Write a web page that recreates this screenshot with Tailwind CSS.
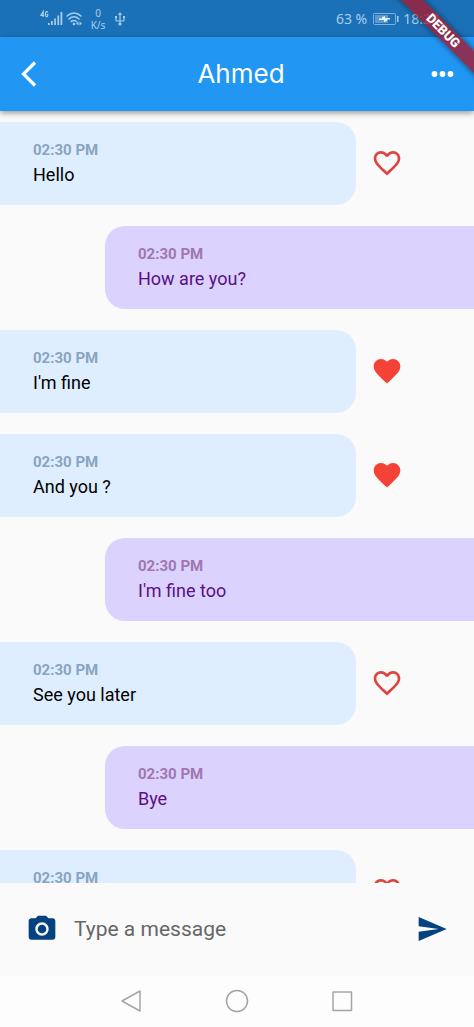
<!DOCTYPE html>
<html lang="en">
<head>
<meta charset="utf-8">
<meta name="viewport" content="width=device-width, initial-scale=1">
<title>Ahmed</title>
<script src="https://cdn.jsdelivr.net/npm/@tailwindcss/browser@4"></script>
</head>
<body class="relative flex h-screen flex-col overflow-hidden bg-[#fafafa] font-['Roboto',sans-serif]">
<svg class="hidden" aria-hidden="true">
  <symbol id="heart" viewBox="0 0 24 24"><path fill="currentColor" d="M12 21.35l-1.45-1.32C5.4 15.36 2 12.28 2 8.5 2 5.42 4.42 3 7.5 3c1.74 0 3.41.81 4.5 2.09C13.09 3.81 14.76 3 16.5 3 19.58 3 22 5.42 22 8.5c0 3.78-3.4 6.86-8.55 11.54L12 21.35z"/></symbol>
  <symbol id="heart-outline" viewBox="0 0 24 24"><path fill="currentColor" d="M16.5 3c-1.74 0-3.41.81-4.5 2.09C10.91 3.81 9.24 3 7.5 3 4.42 3 2 5.42 2 8.5c0 3.78 3.4 6.86 8.55 11.54L12 21.35l1.45-1.32C18.6 15.36 22 12.28 22 8.5 22 5.42 19.58 3 16.5 3zm-4.4 15.55l-.1.1-.1-.1C7.14 14.24 4 11.39 4 8.5 4 6.5 5.5 5 7.5 5c1.54 0 3.04.99 3.57 2.36h1.87C13.46 5.99 14.96 5 16.5 5c2 0 3.5 1.5 3.5 3.5 0 2.89-3.14 5.74-7.9 10.05z"/></symbol>
</svg>

<div class="flex h-[37px] shrink-0 items-center justify-between bg-[#1b71b8] pr-[35px] pl-10 font-['Noto_Sans',sans-serif] text-[#a9cdeb]">
  <div class="flex items-center">
    <svg class="h-5 w-6" viewBox="0 0 24 20" aria-label="4G signal">
      <g fill="none" stroke="currentColor" stroke-width="1.200"><path d="M3.200 8V2.500L1 6.300h3.200M7.700 3.500Q7.500 2.700 6.700 2.700 5.500 2.700 5.500 5.200T6.700 7.700Q7.800 7.700 7.800 5.500H6.700"/></g>
      <path fill="currentColor" d="M8 14h1.700v2H8zM11 12h1.700v4H11zM14.200 9.500h1.700V16h-1.700zM17.400 6.500h1.700V16h-1.700zM20.500 3h1.800v13h-1.800z"/>
    </svg>
    <svg class="ml-0.5 h-5 w-4" viewBox="0 0 16 20" aria-label="Wi-Fi">
      <g fill="none" stroke="currentColor" stroke-width="1.600" stroke-linecap="round"><path d="M1 7Q8 1 15 7M3 10Q8 5.500 13 10M5.300 12.500Q8 10.500 10.500 12.500"/></g>
      <circle cx="8" cy="15" r="1.300" fill="currentColor"/><path fill="currentColor" d="M10 14.500l2.500-2v4zM16 14.500l-2.500-2v4z"/>
    </svg>
    <div class="ml-2 w-4 text-center text-[10px] leading-3 font-normal"><div>0</div><div>K/s</div></div>
    <svg class="ml-2 h-4 w-3" viewBox="0 0 12 16" aria-label="USB">
      <g fill="none" stroke="currentColor" stroke-width="1.200"><path d="M6 3v10M2 6v3q0 1 1 1h6q1 0 1-1V6"/></g><path fill="currentColor" d="M6 1l2 3H4zM1 5h2v2H1zM9 5h2v2H9z"/><circle cx="6" cy="13" r="1.600" fill="currentColor"/>
    </svg>
  </div>
  <div class="flex items-center text-sm">
    <span>63 %</span>
    <svg class="mr-1 ml-1.5 h-4 w-[26px]" viewBox="0 0 26 16" aria-label="Battery charging">
      <rect x=".5" y="2.500" width="22" height="11" rx="1" fill="none" stroke="currentColor" opacity=".7"/><rect x="2" y="4" width="13" height="8" fill="currentColor" opacity=".45"/>
      <path fill="#e3f2fd" d="M6 7.500h3V6l3-1V7h5v1.500h-3V10l-3 1V9H6z"/><path fill="currentColor" d="M24 5h1.500v6H24z"/>
    </svg>
    <span>18:29</span>
  </div>
</div>

<header class="z-10 grid h-[74px] shrink-0 grid-cols-[1fr_auto_1fr] items-center bg-[#2196f3] px-4 text-white shadow-[0_2px_6px_rgba(0,0,0,0.4)]">
  <button aria-label="Back" class="justify-self-start"><svg class="h-8 w-6" viewBox="0 0 24 32"><path d="M19 4.500L7.500 16 19 27.500" fill="none" stroke="currentColor" stroke-width="3.200"/></svg></button>
  <h1 class="pl-2 font-['Inter',sans-serif] text-[26px] leading-8">Ahmed</h1>
  <button aria-label="More options" class="justify-self-end"><svg class="h-8 w-8" viewBox="0 0 32 32" fill="currentColor"><circle cx="8.500" cy="16" r="2.900"/><circle cx="16.500" cy="16" r="2.900"/><circle cx="24.500" cy="16" r="2.900"/></svg></button>
</header>

<main class="flex min-h-0 flex-1 flex-col gap-[21px] overflow-hidden pt-[11px] text-lg leading-6">
  <div class="flex shrink-0 items-center gap-[15px]">
    <article class="w-3/4 rounded-r-[20px] bg-[#dfeefe] pt-4 pb-[18px] pl-[33px]"><time class="block text-[15px] font-bold text-[#87a5c0]">02:30 PM</time><p class="pt-px text-black">Hello</p></article>
    <button aria-label="Like" class="pb-0.5 text-[#dc4540]"><svg class="size-8"><use href="#heart-outline"/></svg></button>
  </div>
  <article class="ml-[105px] shrink-0 rounded-l-[20px] bg-[#dbd2fd] pt-4 pb-[18px] pl-[33px]"><time class="block text-[15px] font-bold text-[#a077b1]">02:30 PM</time><p class="pt-px text-[#5a0f86]">How are you?</p></article>
  <div class="flex shrink-0 items-center gap-[15px]">
    <article class="w-3/4 rounded-r-[20px] bg-[#dfeefe] pt-4 pb-[18px] pl-[33px]"><time class="block text-[15px] font-bold text-[#87a5c0]">02:30 PM</time><p class="pt-px text-black">I'm fine</p></article>
    <button aria-label="Unlike" class="pb-0.5 text-[#f44336]"><svg class="size-8"><use href="#heart"/></svg></button>
  </div>
  <div class="flex shrink-0 items-center gap-[15px]">
    <article class="w-3/4 rounded-r-[20px] bg-[#dfeefe] pt-4 pb-[18px] pl-[33px]"><time class="block text-[15px] font-bold text-[#87a5c0]">02:30 PM</time><p class="pt-px text-black">And you ?</p></article>
    <button aria-label="Unlike" class="pb-0.5 text-[#f44336]"><svg class="size-8"><use href="#heart"/></svg></button>
  </div>
  <article class="ml-[105px] shrink-0 rounded-l-[20px] bg-[#dbd2fd] pt-4 pb-[18px] pl-[33px]"><time class="block text-[15px] font-bold text-[#a077b1]">02:30 PM</time><p class="pt-px text-[#5a0f86]">I'm fine too</p></article>
  <div class="flex shrink-0 items-center gap-[15px]">
    <article class="w-3/4 rounded-r-[20px] bg-[#dfeefe] pt-4 pb-[18px] pl-[33px]"><time class="block text-[15px] font-bold text-[#87a5c0]">02:30 PM</time><p class="pt-px text-black">See you later</p></article>
    <button aria-label="Like" class="pb-0.5 text-[#dc4540]"><svg class="size-8"><use href="#heart-outline"/></svg></button>
  </div>
  <article class="ml-[105px] shrink-0 rounded-l-[20px] bg-[#dbd2fd] pt-4 pb-[18px] pl-[33px]"><time class="block text-[15px] font-bold text-[#a077b1]">02:30 PM</time><p class="pt-px text-[#5a0f86]">Bye</p></article>
  <div class="flex shrink-0 items-start gap-[15px]">
    <article class="h-[83px] w-3/4 rounded-r-[20px] bg-[#dfeefe] pt-4 pb-[18px] pl-[33px]"><time class="block text-[15px] font-bold text-[#87a5c0]">02:30 PM</time></article>
    <button aria-label="Like" class="self-center pb-0.5 text-[#dc4540]"><svg class="size-8"><use href="#heart-outline"/></svg></button>
  </div>
</main>

<form class="flex h-[93px] shrink-0 items-center gap-4 px-[26px] pb-0.5 text-[#04417f]">
  <button type="button" aria-label="Take a photo"><svg class="size-8" viewBox="0 0 24 24" fill="currentColor"><circle cx="12" cy="12" r="3.200"/><path d="M9 2L7.170 4H4c-1.100 0-2 .9-2 2v12c0 1.100.9 2 2 2h16c1.100 0 2-.9 2-2V6c0-1.100-.9-2-2-2h-3.170L15 2H9zm3 15c-2.760 0-5-2.240-5-5s2.240-5 5-5 5 2.240 5 5-2.240 5-5 5z"/></svg></button>
  <input type="text" aria-label="Message" placeholder="Type a message" class="min-w-0 flex-1 bg-transparent text-[21px] leading-8 text-black outline-none placeholder:text-[#666]">
  <button type="submit" aria-label="Send"><svg class="size-8" viewBox="0 0 24 24" fill="currentColor"><path d="M2.010 21L23 12 2.010 3 2 10l15 2-15 2z"/></svg></button>
</form>

<nav class="flex h-[51px] shrink-0 items-center justify-center gap-[81px] bg-[#fdfdfd] pb-0.5 text-[#a5a5a5]">
  <button aria-label="Back"><svg class="size-6" viewBox="0 0 24 24" fill="none" stroke="currentColor" stroke-width="1.500" stroke-linejoin="round"><path d="M2 12L20 2v20z"/></svg></button>
  <button aria-label="Home"><svg class="size-6" viewBox="0 0 24 24" fill="none" stroke="currentColor" stroke-width="1.500"><circle cx="12" cy="12" r="10.500"/></svg></button>
  <button aria-label="Recent apps"><svg class="size-6" viewBox="0 0 24 24" fill="none" stroke="currentColor" stroke-width="1.500"><rect x="3" y="3" width="18.500" height="18.500" rx=".5"/></svg></button>
</nav>

<div class="pointer-events-none absolute top-0 right-0 z-20 size-24 overflow-hidden">
  <div class="absolute top-[23px] right-[-29px] h-4 w-[120px] rotate-45 bg-[#a31c32]/80 text-center text-[13px] leading-4 font-black text-white shadow-[0_0_6px_rgba(0,0,0,0.5)]">DEBUG</div>
</div>
</body>
</html>
